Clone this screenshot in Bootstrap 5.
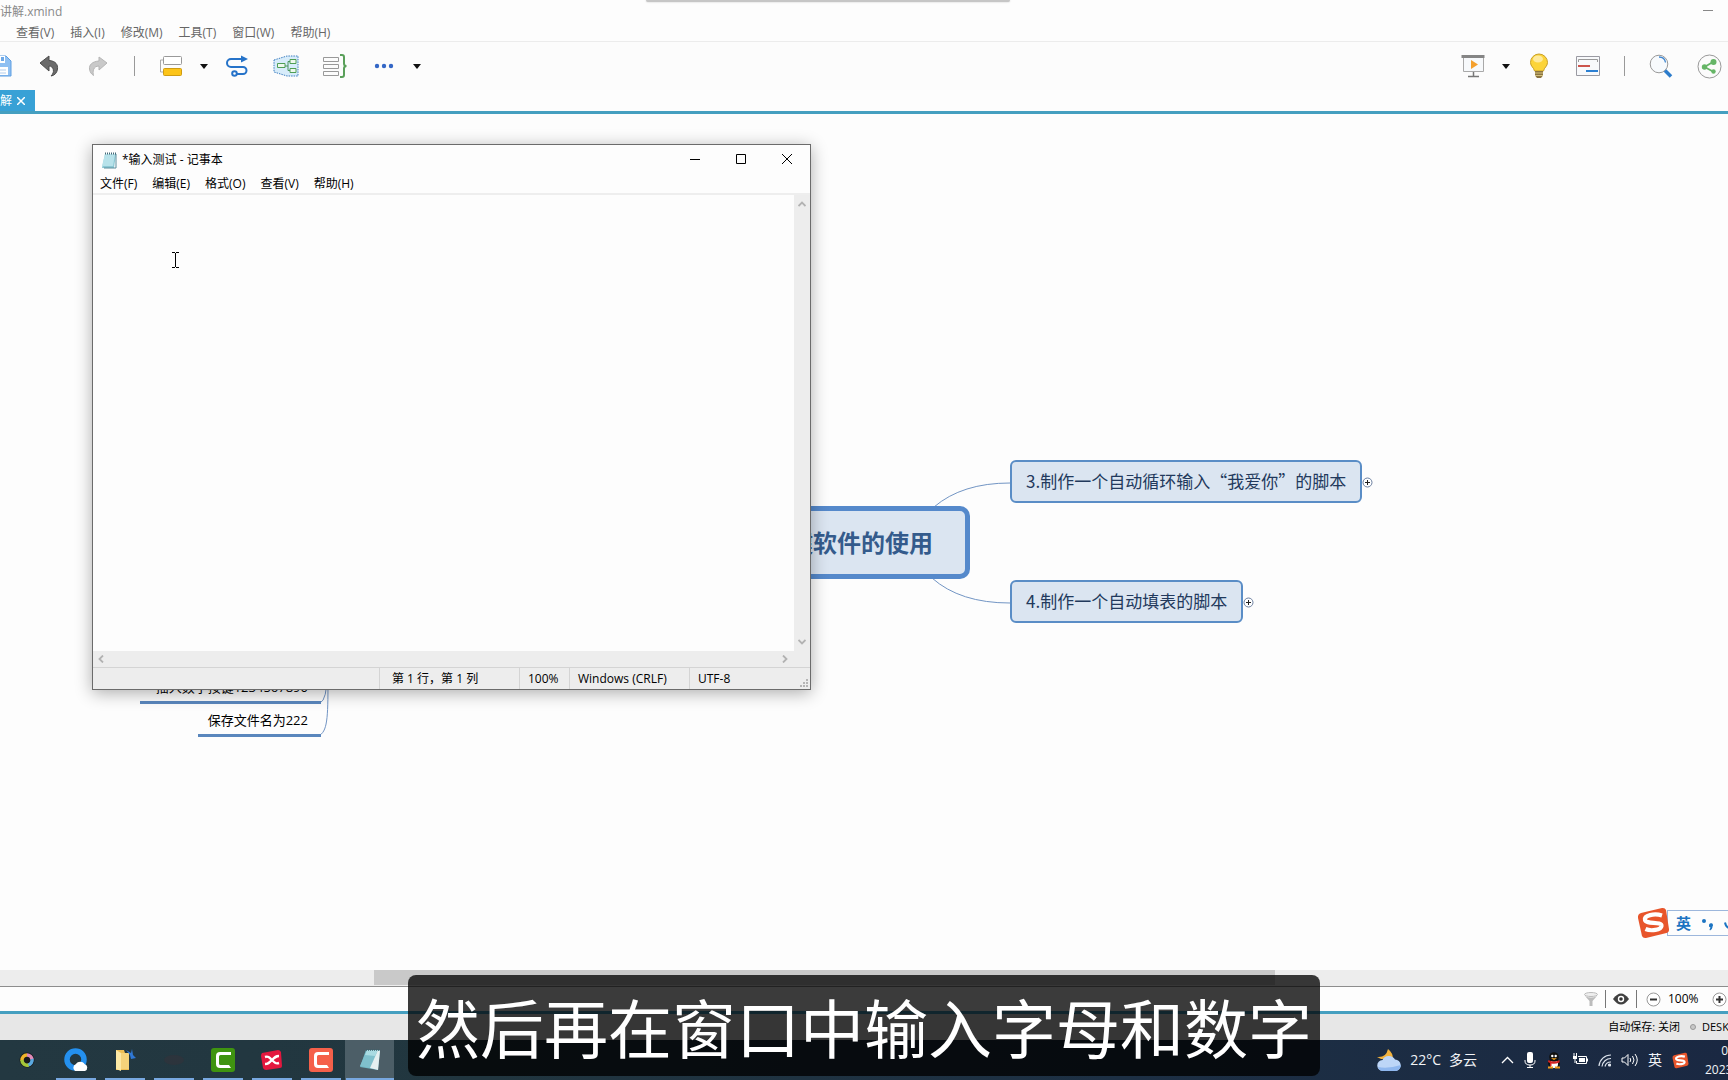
<!DOCTYPE html>
<html lang="zh-CN">
<head>
<meta charset="utf-8">
<meta name="viewport" content="width=device-width, initial-scale=1">
<title>讲解.xmind</title>
<link href="https://cdn.jsdelivr.net/npm/bootstrap@5.3.0/dist/css/bootstrap.min.css" rel="stylesheet">
<script src="https://cdn.jsdelivr.net/npm/bootstrap@5.3.0/dist/js/bootstrap.bundle.min.js"></script>
<style>
  body { font-family: "Open Sans", "Noto Sans CJK SC", sans-serif; font-size: 12px; line-height: 16px; background: #fdfdfd; color: #000; }
  button { background: none; border: 0; padding: 0; color: inherit; line-height: inherit; flex: none; }
  svg { display: block; flex: none; }

  /* application frame */
  .app-title { height: 24px; color: #8a8a8a; }
  .app-min { width: 40px; height: 20px; }
  .app-menu { height: 18px; padding-left: 16px; color: #666; border-bottom: 1px solid #ececec; gap: 16px; }
  .toolstrip { height: 48px; background: #fcfcfc; }
  .tools-left { margin-left: -25px; }
  .tools-right { margin-right: -6px; }
  .tool { width: 49px; height: 32px; }
  .tool-caret { width: 17px; height: 32px; }
  .tool-rule { width: 24px; height: 20px; }
  .tool-rule::before { content: ""; display: block; width: 1px; height: 100%; margin: 0 auto; background: #999; }
  .tabstrip { height: 24px; border-bottom: 3px solid #459fc0; }
  .doc-tab { width: 35px; height: 21px; background: #38a1d6; color: #fff; gap: 5px; }
  .top-pill { left: 50%; width: 364px; height: 2px; margin-left: -218px; background: #c6c6c6; border-radius: 0 0 3px 3px; box-shadow: 0 0 2px #c6c6c6; }

  /* mind map */
  .topic { border: 2px solid #5a8dc6; border-radius: 6px; background: #dbe5f1; color: #22395c; height: 43px; padding: 0 14px; font: 17px/38px "Noto Sans CJK SC", sans-serif; left: 1010px; }
  .topic-3 { top: 346px; }
  .topic-4 { top: 466px; }
  .topic-root { left: 700px; top: 392px; width: 270px; height: 73px; border: 5px solid #5589cb; border-radius: 10px; background: #dbe5f1; color: #345b8c; padding-right: 32px; font: 700 24px/62px "Noto Sans CJK SC", sans-serif; }
  .leaf-list { left: 140px; top: 557px; width: 181px; }
  .leaf { height: 33px; border-bottom: 3px solid #5a87bd; padding: 0 13px 0 10px; font-size: 13px; line-height: 32px; }

  /* notepad window */
  .notepad { left: 92px; top: 30px; width: 719px; height: 546px; background: #fdfdfd; border: 1px solid #6b6b6b; box-shadow: 0 3px 16px rgba(0,0,0,.32); }
  .np-title { height: 30px; padding-left: 8px; gap: 5px; }
  .np-ctl { width: 46px; height: 28px; }
  .np-menu { height: 20px; padding-left: 7px; gap: 15px; border-bottom: 2px solid #eee; }
  .np-text { border: 0; outline: 0; resize: none; background: #fdfdfd; padding: 4px; }
  .np-vbar { width: 16px; background: #ededed; padding: 6px 0; }
  .np-hbar { height: 16px; background: #ededed; padding: 0 22px 0 5px; }
  .np-status { height: 22px; background: #ededed; border-top: 1px solid #d4d4d4; line-height: 21px; }
  .np-cell { border-left: 1px solid #d4d4d4; padding-left: 8px; }
  .np-c1 { width: 140px; padding-left: 12px; }
  .np-c2 { width: 50px; }
  .np-c3 { width: 120px; }
  .np-c4 { width: 121px; }
  .ibeam { left: 171px; top: 137px; }

  /* input method bar */
  .ime { right: 0; bottom: 31px; width: 91px; height: 32px; }
  .ime-box { height: 26px; margin: 0 -4px 0 -3px; padding-left: 8px; border: 1px solid #9db7dc; background: #fdfdfd; color: #1c74c2; font-size: 15px; font-weight: 700; }

  /* lower bars */
  .hscroll { height: 16px; background: #ededed; }
  .hthumb { height: 15px; margin-left: 21.65%; width: 52.15%; background: #c9c9c9; }
  .viewbar { height: 28px; border-top: 1px solid #8d8d8d; border-bottom: 3px solid #459fc0; }
  .vrule { width: 1px; height: 18px; background: #777; margin: 0 7px; }
  .zoom-set { gap: 7px; padding: 0 1px 0 2px; }
  .zoom-num { width: 37px; }
  .savebar { height: 26px; background: #e7e7e7; font-size: 11px; gap: 6px; }
  .host { width: 26px; }
  .save-state { margin-right: 4px; }
  .taskbar { height: 40px; background: linear-gradient(90deg, #233841 0%, #21363f 28%, #1d3044 65%, #1a2842 100%); color: #f2f4f7; }
  .tasks { padding-left: 2px; }
  .task { width: 49px; height: 40px; }
  .task.running { background: linear-gradient(#78a8e0, #78a8e0) center bottom / 40px 2px no-repeat; }
  .task.active { background: linear-gradient(#78a8e0, #78a8e0) center bottom / 48px 2px no-repeat, #4c5e67; }
  .tray { font-size: 14px; }
  .weather { gap: 8px; margin-right: 24px; }
  .tray-set { gap: 10px; margin-right: 16px; }
  .clock { width: 23px; font-size: 12px; line-height: 19px; }
  .caption-box { left: 50%; bottom: 4px; transform: translateX(-50%); height: 101px; padding: 0 8px; border-radius: 8px; background: rgba(0,0,0,.77); color: #fff; font: 64px/100px "Noto Sans CJK SC", sans-serif; }
</style>
</head>
<body>
<div class="vh-100 d-flex flex-column overflow-hidden position-relative">
  <div class="top-pill position-absolute"></div>

  <header class="app-title d-flex align-items-center justify-content-between flex-shrink-0">
    <span>讲解.xmind</span>
    <button class="app-min" aria-label="最小化"><svg width="40" height="20"><path d="M15 8.500h10" stroke="#888"/></svg></button>
  </header>
  <nav class="app-menu d-flex align-items-center flex-shrink-0">
    <button>查看(V)</button><button>插入(I)</button><button>修改(M)</button><button>工具(T)</button><button>窗口(W)</button><button>帮助(H)</button>
  </nav>

  <div class="toolstrip d-flex align-items-center justify-content-between flex-shrink-0">
    <div class="tools-left d-flex align-items-center">
      <button class="tool d-flex align-items-center justify-content-center" aria-label="保存"><svg width="24" height="22" viewBox="0 0 24 22"><path d="M1 1h17l5 5v15H1z" fill="#8fc0f2" stroke="#5f9fe2"/><path d="M6 1h11v7H6z" fill="#fff"/><path d="M13 2h3v4h-3z" fill="#6ea8e6"/><path d="M4 12h16v8H4z" fill="#fff"/><path d="M6 15h12M6 18h12" stroke="#b3cdea"/></svg></button>
      <button class="tool d-flex align-items-center justify-content-center" aria-label="撤销"><svg width="20" height="22" viewBox="0 0 20 22"><path d="M1 8 10 1v4.500C17 6 19 10 18.500 14 18 18 15.500 20.500 12 21c2-2 2.800-4 2.300-6.300C13.800 12.500 12.500 11 10 11v5z" fill="#6b6b6b" stroke="#4d4d4d"/></svg></button>
      <button class="tool d-flex align-items-center justify-content-center" aria-label="重做"><svg width="20" height="22" viewBox="0 0 20 22"><path d="M19 8 11 2v4C4 6.500 1 10 1.500 14 2 17.500 3.500 19 5.500 20.500 4.500 17 5 11 11 11v4z" fill="#c9c9c9" stroke="#b5b5b5"/></svg></button>
      <span class="tool-rule"></span>
      <button class="tool d-flex align-items-center justify-content-center" aria-label="主题"><svg width="24" height="22" viewBox="0 0 24 22"><path d="M5 5H1.500v12H5" fill="none" stroke="#aaa"/><rect x="4.500" y="1.500" width="18" height="8" rx="1" fill="#fff" stroke="#999"/><rect x="4.500" y="13.500" width="18" height="7" rx="1" fill="#fcc419" stroke="#cf9c12"/></svg></button>
      <button class="tool-caret d-flex align-items-center justify-content-center" aria-label="主题选项"><svg width="8" height="5"><path d="M0 0h8L4 5z" fill="#111"/></svg></button>
      <button class="tool d-flex align-items-center justify-content-center" aria-label="联系"><svg width="24" height="22" viewBox="0 0 24 22" fill="none" stroke="#2673c9" stroke-width="2"><path d="M17 4H6a4 4 0 0 0 0 8h12a3.500 3.500 0 0 1 0 7h-6"/><path d="M16 .5 23 4l-7 3.500z" fill="#2673c9" stroke="none"/><circle cx="9.500" cy="18.500" r="2.300" fill="#fff"/></svg></button>
      <button class="tool d-flex align-items-center justify-content-center" aria-label="外框"><svg width="26" height="22" viewBox="0 0 26 22" fill="none"><path d="M1 5 14 1h11v20H14L1 17z" fill="#d7ecfa" stroke="#3f7fc1" stroke-dasharray="1.500 1"/><path d="M12 11h3M15 6.500v9M15 6.500h2M15 15.500h2" stroke="#4b9360"/><path d="M4.500 8.500h7.500v4H4.500zM17 4.500h6v4h-6zM17 13.500h6v4h-6z" stroke="#4f9e54" fill="#eef8ee"/></svg></button>
      <button class="tool d-flex align-items-center justify-content-center" aria-label="概要"><svg width="26" height="24" viewBox="0 0 26 24" fill="none"><path d="M1.500 3.500h15v4h-15zM1.500 10.500h15v4h-15zM1.500 17.500h15v4h-15z" stroke="#999"/><path d="M18 1h2c1.500 0 2 .5 2 2v6.500c0 1.500.5 2.500 2.500 2.500-2 0-2.500 1-2.500 2.500V21c0 1.500-.5 2-2 2h-2" stroke="#5aa05a" stroke-width="2"/></svg></button>
      <button class="tool d-flex align-items-center justify-content-center" aria-label="更多"><svg width="20" height="6" fill="#3467c6"><circle cx="3" cy="3" r="2.200"/><circle cx="10" cy="3" r="2.200"/><circle cx="17" cy="3" r="2.200"/></svg></button>
      <button class="tool-caret d-flex align-items-center justify-content-center" aria-label="更多选项"><svg width="8" height="5"><path d="M0 0h8L4 5z" fill="#111"/></svg></button>
    </div>
    <div class="tools-right d-flex align-items-center">
      <button class="tool d-flex align-items-center justify-content-center" aria-label="演示"><svg width="24" height="24" viewBox="0 0 24 24"><path d="M2.500 3h20v14.500h-20z" fill="#f7f9fb" stroke="#a9a9a9"/><path d="M.5 1h23v3H.5z" fill="#858585"/><path d="M10 6v9l7-4.500z" fill="#f4a02d"/><path d="M12.500 18v4M7 22.500h11" stroke="#777" stroke-width="1.500"/></svg></button>
      <button class="tool-caret d-flex align-items-center justify-content-center" aria-label="演示选项"><svg width="8" height="5"><path d="M0 0h8L4 5z" fill="#111"/></svg></button>
      <button class="tool d-flex align-items-center justify-content-center" aria-label="头脑风暴"><svg width="20" height="26" viewBox="0 0 20 26"><path d="M10 1a8.500 8.500 0 0 1 8.500 8.500c0 4-3.500 5-4 8.500h-9c-.5-3.500-4-4.500-4-8.500A8.500 8.500 0 0 1 10 1z" fill="#fcd43a" stroke="#c9a028"/><ellipse cx="9" cy="6" rx="5" ry="3.500" fill="#fff" opacity=".5"/><path d="M6 18h8v4.500L12 25H8l-2-2.500z" fill="#8b7440"/><path d="M6 20h8M6 22.500h8" stroke="#d4c27e"/></svg></button>
      <button class="tool d-flex align-items-center justify-content-center" aria-label="甘特图"><svg width="24" height="20" viewBox="0 0 24 20" fill="none"><path d="M.5.5h23v19H.5z" fill="#f8f9fb" stroke="#9a9aa2"/><path d="M2.500 6V3.500h19V6" stroke="#999"/><path d="M2 10h12" stroke="#cc544c" stroke-width="2"/><path d="M10 15h12" stroke="#2c80d2" stroke-width="2"/></svg></button>
      <span class="tool-rule"></span>
      <button class="tool d-flex align-items-center justify-content-center" aria-label="查找"><svg width="24" height="24" viewBox="0 0 24 24" fill="none"><circle cx="10" cy="10" r="8.800" fill="#f7fafd" stroke="#999"/><path d="M10 3c3.500 0 6 2 6.500 5.500" stroke="#3f86cf" stroke-width="1.300"/><path d="m16 16.500 6 6" stroke="#2c7ccb" stroke-width="3.600"/></svg></button>
      <button class="tool d-flex align-items-center justify-content-center" aria-label="分享"><svg width="25" height="25" viewBox="0 0 25 25"><circle cx="12.500" cy="12.500" r="11.500" fill="#fbfbfb" stroke="#999"/><path d="m16 8-8.500 5 8.500 4.500" fill="none" stroke="#65b566" stroke-width="1.800"/><circle cx="16.500" cy="8" r="3" fill="#65b566"/><circle cx="7.500" cy="13" r="2.700" fill="#65b566"/><circle cx="16.500" cy="17.500" r="2.200" fill="#65b566"/></svg></button>
    </div>
  </div>

  <div class="tabstrip d-flex flex-shrink-0">
    <div class="doc-tab d-flex align-items-center">
      <span>解</span>
      <button aria-label="关闭标签"><svg width="8" height="8"><path d="m0 0 8 8M8 0 0 8" stroke="#fff" stroke-width="1.500"/></svg></button>
    </div>
  </div>

  <main class="flex-grow-1 position-relative overflow-hidden">
    <svg class="position-absolute top-0 start-0 w-100 h-100" fill="none" stroke="#7295c4">
      <path d="M934 393Q962 369 1010 369M932 464Q960 489 1010 489"/>
      <path d="M320 589Q327 586 327 560M320 621C328 616 328 600 328 560"/>
      <g fill="#fff" stroke="#6b7fa0"><circle cx="1367.500" cy="368.500" r="4.500"/><circle cx="1248.500" cy="488.500" r="4.500"/></g>
      <path d="M1365 368.500h5M1367.500 366v5M1246 488.500h5M1248.500 486v5" stroke="#222"/>
    </svg>
    <div class="topic topic-3 position-absolute text-nowrap">3.制作一个自动循环输入“我爱你”的脚本</div>
    <div class="topic topic-4 position-absolute text-nowrap">4.制作一个自动填表的脚本</div>
    <div class="topic-root position-absolute text-end text-nowrap">按键软件的使用</div>
    <div class="leaf-list position-absolute d-flex flex-column align-items-end">
      <div class="leaf w-100 text-end text-nowrap">插入数字按键1234567890</div>
      <div class="leaf text-nowrap">保存文件名为222</div>
    </div>

    <section class="notepad position-absolute d-flex flex-column">
      <div class="np-title d-flex align-items-center flex-shrink-0">
        <svg width="16" height="17" viewBox="0 0 16 17"><path d="M4 2h11l-2 14H1z" fill="#8cc8d4"/><path d="M4 2h10l-2 12H1z" fill="#b7e2ea"/><path d="m14 2 1 0v14H3" fill="none" stroke="#5b8d9c"/><path d="M4 1.500h11" stroke="#456a78" stroke-width="2" stroke-dasharray="1 1"/></svg>
        <span class="me-auto">*输入测试 - 记事本</span>
        <div class="d-flex align-self-start">
          <button class="np-ctl d-flex align-items-center justify-content-center" aria-label="最小化"><svg width="10" height="10"><path d="M0 5.500h10" stroke="#000"/></svg></button>
          <button class="np-ctl d-flex align-items-center justify-content-center" aria-label="最大化"><svg width="10" height="10"><path d="M.5.5h9v9h-9z" fill="none" stroke="#000"/></svg></button>
          <button class="np-ctl d-flex align-items-center justify-content-center" aria-label="关闭"><svg width="10" height="10"><path d="m0 0 10 10M10 0 0 10" stroke="#000"/></svg></button>
        </div>
      </div>
      <nav class="np-menu d-flex align-items-center flex-shrink-0">
        <button>文件(F)</button><button>编辑(E)</button><button>格式(O)</button><button>查看(V)</button><button>帮助(H)</button>
      </nav>
      <div class="d-flex flex-grow-1">
        <textarea class="np-text flex-grow-1" aria-label="文本"></textarea>
        <div class="np-vbar d-flex flex-column align-items-center justify-content-between">
          <svg width="8" height="6"><path d="m.5 5 3.500-3.500L7.500 5" fill="none" stroke="#b2b2b2" stroke-width="1.800"/></svg>
          <svg width="8" height="6"><path d="m.5 1 3.500 3.500L7.500 1" fill="none" stroke="#b2b2b2" stroke-width="1.800"/></svg>
        </div>
      </div>
      <div class="np-hbar d-flex align-items-center justify-content-between flex-shrink-0">
        <svg width="6" height="8"><path d="M5 .5 1.500 4 5 7.500" fill="none" stroke="#b2b2b2" stroke-width="1.800"/></svg>
        <svg width="6" height="8"><path d="M1 .5 4.500 4 1 7.500" fill="none" stroke="#b2b2b2" stroke-width="1.800"/></svg>
      </div>
      <div class="np-status d-flex justify-content-end flex-shrink-0">
        <div class="np-cell np-c1">第 1 行，第 1 列</div>
        <div class="np-cell np-c2">100%</div>
        <div class="np-cell np-c3">Windows (CRLF)</div>
        <div class="np-cell np-c4 d-flex justify-content-between align-items-end">UTF-8
          <svg width="10" height="10" fill="#b5b5b5"><path d="M6 0h2v2H6zM6 3h2v2H6zM3 3h2v2H3zM0 6h2v2H0zM3 6h2v2H3zM6 6h2v2H6z"/></svg>
        </div>
      </div>
    </section>
    <svg class="ibeam position-absolute" width="9" height="18"><path d="M1 1.500h3M5 1.500h3M4.500 2v14M1 16.500h3M5 16.500h3" stroke="#000"/></svg>

    <div class="ime position-absolute d-flex align-items-center">
      <svg class="z-1" width="33" height="32" viewBox="0 0 33 32"><path d="M4 6 25 1q3-.5 4 2l3 19q.3 3-2.500 4L9 31q-3 .5-4-2L1 11q-.5-4 3-5z" fill="#e8552b"/><path d="M25 8.500C17 6 7 8.500 8 13c1 4.500 17 1 16.500 6C24 23 14 24.500 8.500 22" fill="none" stroke="#fff" stroke-width="4.200"/></svg>
      <div class="ime-box d-flex align-items-center flex-grow-1">
        <span>英</span>
        <svg width="40" height="20" viewBox="0 0 40 20" fill="#1c74c2"><circle cx="13" cy="8" r="2"/><path d="M18 12a2 2 0 1 1 3.500 1.500c0 2-1 3-2.500 4l-.5-1 1-2a2 2 0 0 1-1.500-2.500z"/><path d="M34 9.500q1 5 5 6" fill="none" stroke="#1c74c2" stroke-width="2"/></svg>
      </div>
    </div>
  </main>

  <div class="hscroll flex-shrink-0"><div class="hthumb"></div></div>
  <div class="viewbar d-flex align-items-center justify-content-end flex-shrink-0">
    <button aria-label="筛选"><svg width="14" height="14" viewBox="0 0 14 14"><ellipse cx="7" cy="2.500" rx="6.500" ry="2" fill="#eee" stroke="#bbb"/><path d="M1 4q6 3 12 0L8.500 9v5h-3V9z" fill="#bcbcbc"/></svg></button>
    <span class="vrule"></span>
    <button aria-label="显示"><svg width="16" height="12" viewBox="0 0 16 12"><path d="M0 6Q8-5 16 6 8 17 0 6z" fill="#404040"/><circle cx="8" cy="6" r="3.200" fill="#fff"/><circle cx="8" cy="6" r="1.800" fill="#333"/></svg></button>
    <span class="vrule"></span>
    <div class="zoom-set d-flex align-items-center">
      <button aria-label="缩小"><svg width="15" height="15"><circle cx="7.500" cy="7.500" r="6.500" fill="#fff" stroke="#999"/><path d="M4 7.500h7" stroke="#333" stroke-width="2"/></svg></button>
      <span class="zoom-num">100%</span>
      <button aria-label="放大"><svg width="15" height="15"><circle cx="7.500" cy="7.500" r="6.500" fill="#fff" stroke="#999"/><path d="M4 7.500h7M7.500 4v7" stroke="#333" stroke-width="2"/></svg></button>
    </div>
  </div>
  <div class="savebar d-flex align-items-center justify-content-end flex-shrink-0">
    <span class="save-state">自动保存: 关闭</span>
    <svg width="6" height="6"><circle cx="3" cy="3" r="2.500" fill="#c8c8c8" stroke="#999"/></svg>
    <span class="host text-nowrap">DESK</span>
  </div>

  <footer class="taskbar d-flex justify-content-between flex-shrink-0">
    <div class="tasks d-flex">
      <button class="task d-flex align-items-center justify-content-center" aria-label="相机"><svg width="16" height="16" viewBox="0 0 16 16" fill="none" stroke-width="3.500"><circle cx="8" cy="8" r="7.500" fill="#17191c"/><path d="M3 8.500A5 5 0 0 1 8 3" stroke="#f0b429"/><path d="M8 3a5 5 0 0 1 5 4.500" stroke="#e08ab8"/><path d="M13 7a5 5 0 0 1-4 6" stroke="#5aa9e0"/><path d="M9.500 13A5 5 0 0 1 3 8" stroke="#a4c639"/></svg></button>
      <button class="task running d-flex align-items-center justify-content-center" aria-label="浏览器"><svg width="24" height="24" viewBox="0 0 24 24"><circle cx="11.500" cy="11.500" r="8.500" fill="none" stroke="#2490ee" stroke-width="5.500"/><path d="M11 23a4 4 0 0 1 1-7 5 5 0 0 1 8.500 0 3.700 3.700 0 0 1 .5 7z" fill="#fff"/></svg></button>
      <button class="task running d-flex align-items-center justify-content-center" aria-label="文件夹"><svg width="22" height="24" viewBox="0 0 22 24"><path d="M2 2h8l1 3h4v17H2z" fill="#eebf55"/><path d="m2 2 5 3v18l-5-2z" fill="#fde9a5"/><path d="M7 5h8v16H7z" fill="#f5d37a"/><path d="m12 2 5 3 1-4 1 6 3 3-5 1-1-4z" fill="#2f78d6"/></svg></button>
      <button class="task running d-flex align-items-center justify-content-center" aria-label="后台程序"><svg width="24" height="14"><ellipse cx="12" cy="7" rx="10" ry="5" fill="#3d2f38" opacity=".4"/></svg></button>
      <button class="task running d-flex align-items-center justify-content-center" aria-label="录屏编辑"><svg width="24" height="24" viewBox="0 0 24 24"><rect width="24" height="24" rx="3" fill="#3f9410"/><path d="M20 4H9Q5 4 5 8v8q0 4 4 4h11l-2-3H9.500Q8 17 8 15.500v-7Q8 7 9.500 7H20z" fill="#fff"/></svg></button>
      <button class="task running d-flex align-items-center justify-content-center" aria-label="思维导图"><svg width="22" height="22" viewBox="0 0 22 22"><path d="m1 4 16-3q2 0 3 2l1 14q0 2-2 2L5 21q-2 0-3-2L0 7q0-2 1-3z" fill="#e3173e"/><path d="M4 8c3-1 4 0 7 3s4 4 7 3M4 15c3 0 4-1 7-4s4-4 7-4" fill="none" stroke="#fff" stroke-width="2.400"/></svg></button>
      <button class="task running d-flex align-items-center justify-content-center" aria-label="录屏"><svg width="24" height="24" viewBox="0 0 24 24"><rect width="24" height="24" rx="3" fill="#f5604a"/><path d="M20 4H9Q5 4 5 8v8q0 4 4 4h11l-2-3H9.500Q8 17 8 15.500v-7Q8 7 9.500 7H20z" fill="#fff"/></svg></button>
      <button class="task active d-flex align-items-center justify-content-center" aria-label="记事本"><svg width="24" height="24" viewBox="0 0 24 24"><path d="M8 2h14l-2 20-18-3z" fill="#6fb7c4"/><path d="M9 2h11L12 20 2 18z" fill="#7fc0cc"/><path d="M9 2h11l-3 6-10-1z" fill="#a9dbe2"/><path d="m20 2 2 1-2 19-8-2z" fill="#e4eff0"/><path d="M8 2h14" stroke="#3e606b" stroke-width="1.500" stroke-dasharray="1 1"/></svg></button>
    </div>
    <div class="tray d-flex align-items-center">
      <div class="weather d-flex align-items-center">
        <svg width="25" height="24" viewBox="0 0 25 24"><path d="M11 1q5 4 5 10H4L0 9q9 1 11-8z" fill="#f3b33d"/><path d="M6 23a5.500 5.500 0 0 1-.5-11 7 7 0 0 1 12.500-.5 5.800 5.800 0 0 1 1 11.500z" fill="#bdd6f7"/><path d="M6 23a5 5 0 0 1-5-4q10 2 23-2-.5 5-5 6z" fill="#8fb7ee"/></svg>
        <span>22°C</span><span>多云</span>
      </div>
      <div class="tray-set d-flex align-items-center">
        <svg width="13" height="8"><path d="m1 7 5.500-5.500L12 7" fill="none" stroke="#fff" stroke-width="1.300"/></svg>
        <svg width="12" height="16" viewBox="0 0 12 16"><rect x="3" width="6" height="11" rx="2" fill="#fff"/><path d="M1 8v1q0 4 5 4t5-4V8M6 13v2M3 15.500h6" fill="none" stroke="#fff"/></svg>
        <svg width="16" height="17" viewBox="0 0 16 17"><ellipse cx="8" cy="11" rx="6" ry="5" fill="#111"/><ellipse cx="8" cy="12" rx="4" ry="4" fill="#fff"/><circle cx="8" cy="5" r="4.800" fill="#111"/><circle cx="6.300" cy="4" r="1.200" fill="#fff"/><circle cx="9.700" cy="4" r="1.200" fill="#fff"/><path d="M5 6.300h6L8 8z" fill="#f9a61a"/><path d="M2.500 8q5.500 3 11 0v2.500q-5 2-8 1V14H4v-3l-2-1z" fill="#d62222"/><path d="M2 15.500h5M9 15.500h5" stroke="#f39a1a" stroke-width="2"/></svg>
        <svg width="16" height="14" viewBox="0 0 16 14" fill="none" stroke="#fff"><path d="M6 3.500h8.500v7H4.500V8"/><path d="M7 5h6v4H7zM1 3h4v3H1zM15 5.500h1v3h-1z" fill="#fff" stroke="none"/><path d="M2 0v3M4.500 0v3M3 6v4"/></svg>
        <svg width="13" height="14" viewBox="0 0 13 14" fill="none" stroke="#dce3ec" stroke-width="1.200"><path d="M1 13A12 12 0 0 1 13 2M4 13.500A9 9 0 0 1 13 5.500M7 13.500A6 6 0 0 1 13 9"/><circle cx="11.500" cy="12" r="1" fill="#fff"/></svg>
        <svg width="17" height="14" viewBox="0 0 17 14" fill="none" stroke="#fff"><path d="M1 5h2.500L7 1.500v11L3.500 9H1zM9 5q1.500 2 0 4M11.500 3q3 4 0 8M14 1q4.500 6 0 12"/></svg>
        <span>英</span>
        <svg width="17" height="17" viewBox="0 0 33 32"><path d="M4 6 25 1q3-.5 4 2l3 19q.3 3-2.500 4L9 31q-3 .5-4-2L1 11q-.5-4 3-5z" fill="#e8552b"/><path d="M25 8.500C17 6 7 8.500 8 13c1 4.500 17 1 16.500 6C24 23 14 24.500 8.500 22" fill="none" stroke="#fff" stroke-width="4.200"/></svg>
      </div>
      <div class="clock text-nowrap"><div class="text-end">0</div><div>2023</div></div>
    </div>
  </footer>

  <div class="caption-box position-absolute text-nowrap">然后再在窗口中输入字母和数字</div>
</div>
</body>
</html>
